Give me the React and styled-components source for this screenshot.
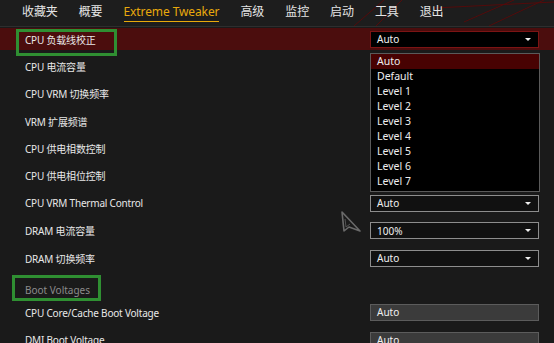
import React from 'react';
import styled, { createGlobalStyle } from 'styled-components';

const GlobalStyle = createGlobalStyle`
  html, body {
    margin: 0;
    padding: 0;
    background: #1a1a1a;
  }
  body {
    font-family: 'Noto Sans', 'Noto Sans CJK SC', sans-serif;
    color: #e6e6e6;
    overflow: hidden;
  }
`;

const StyledScreen = styled.div`
  position: relative;
  width: 554px;
  height: 343px;
  overflow: hidden;
  background: #1a1a1a;
`;

const StyledNav = styled.nav`
  position: relative;
  display: flex;
  align-items: center;
  height: 26px;
  padding-left: 22px;
  background: #1d1d1d;
  border-bottom: 1px solid #2e2e2e;
  overflow: hidden;

  .streaks {
    position: absolute;
    top: 0;
    right: 0;
    pointer-events: none;
  }
`;

const NavItem = styled.span`
  position: relative;
  z-index: 1;
  margin-right: 21px;
  padding-bottom: 1px;
  font-size: 12px;
  line-height: 16px;
  letter-spacing: -0.1px;
  color: ${({ active }) => (active ? '#e9a90c' : '#e4e4e4')};
  border-bottom: 1.5px solid ${({ active }) => (active ? '#e9a90c' : 'transparent')};
`;

const StyledList = styled.div`
  display: flex;
  flex-direction: column;
  gap: 5.4px;
  padding-top: 1px;
`;

const Row = styled.div`
  position: relative;
  display: flex;
  align-items: center;
  justify-content: space-between;
  height: 22px;
  padding: 0 15px 0 25px;
  background: ${({ selected }) => (selected ? '#4b0d0d' : 'transparent')};

  /* green annotation frame */
  ${({ marked }) =>
    marked &&
    `
    &::after {
      content: '';
      position: absolute;
      left: 16px;
      top: 1px;
      box-sizing: border-box;
      width: 101px;
      height: 27px;
      border: 3px solid #2f8f32;
      pointer-events: none;
    }
  `}
`;

const Label = styled.span`
  font-size: 10px;
  letter-spacing: -0.2px;
  color: #e8e8e8;
  white-space: nowrap;
`;

const Select = styled.div`
  position: relative;
  display: flex;
  align-items: center;
  justify-content: space-between;
  box-sizing: border-box;
  width: 169px;
  height: 17px;
  padding: 0 7px 0 6px;
  font-size: 10px;
  color: #f0f0f0;
  background: ${({ open }) => (open ? '#000' : '#111')};
  border: 1px solid ${({ open }) => (open ? '#7c1414' : '#8d8d8d')};
`;

const Caret = styled.span`
  width: 0;
  height: 0;
  border-left: 3.5px solid transparent;
  border-right: 3.5px solid transparent;
  border-top: 3.5px solid #f0f0f0;
`;

const StyledMenu = styled.ul`
  position: absolute;
  top: 21px;
  left: -1px;
  z-index: 5;
  box-sizing: border-box;
  width: 170px;
  margin: 0;
  padding: 0 0 2px;
  list-style: none;
  background: #000;
  border: 1px solid #5a5a5a;
`;

const MenuItem = styled.li`
  height: 15px;
  padding-left: 6px;
  font-size: 10.5px;
  line-height: 15px;
  color: #eeeeee;
  background: ${({ active }) => (active ? '#480202' : 'transparent')};
`;

const SectionHead = styled.div`
  position: relative;
  display: flex;
  flex-direction: column;
  height: 22px;

  &::after {
    content: '';
    position: absolute;
    left: 12px;
    top: 0;
    box-sizing: border-box;
    width: 89px;
    height: 26px;
    border: 3px solid #2f8f32;
    pointer-events: none;
  }
`;

const SectionRule = styled.div`
  height: 1px;
  margin: 3.5px 13px 0 0;
  background: #8a8a8a;
`;

const SectionTitle = styled.div`
  padding-left: 25px;
  font-size: 10px;
  line-height: 24px;
  color: #8c8c8c;
`;

const ValueBox = styled.div`
  box-sizing: border-box;
  width: 169px;
  height: 17px;
  padding-left: 6px;
  font-size: 10px;
  line-height: 15px;
  color: #f0f0f0;
  background: #3b3b3b;
  border: 1px solid #5c5c5c;
`;

const Cursor = styled.svg`
  position: absolute;
  left: 340px;
  top: 210px;
`;

const navItems = ['收藏夹', '概要', 'Extreme Tweaker', '高级', '监控', '启动', '工具', '退出'];
const menuOptions = ['Auto', 'Default', 'Level 1', 'Level 2', 'Level 3', 'Level 4', 'Level 5', 'Level 6', 'Level 7'];

const settings = [
  { label: 'CPU 负载线校正', value: 'Auto', open: true },
  { label: 'CPU 电流容量' },
  { label: 'CPU VRM 切换频率' },
  { label: 'VRM 扩展频谱' },
  { label: 'CPU 供电相数控制' },
  { label: 'CPU 供电相位控制' },
  { label: 'CPU VRM Thermal Control', value: 'Auto' },
  { label: 'DRAM 电流容量', value: '100%' },
  { label: 'DRAM 切换频率', value: 'Auto' },
];

const bootVoltages = [
  { label: 'CPU Core/Cache Boot Voltage', value: 'Auto' },
  { label: 'DMI Boot Voltage', value: 'Auto' },
];

const App = () => (
  <>
    <GlobalStyle />
    <StyledScreen>
      <StyledNav>
        <svg className="streaks" width="240" height="26" viewBox="0 0 240 26">
          <g stroke="#5a0a0a" strokeWidth="1" fill="none" opacity="0.9">
            <line x1="40" y1="26" x2="70" y2="0" />
            <line x1="62" y1="26" x2="88" y2="0" />
            <line x1="150" y1="22" x2="200" y2="0" />
            <line x1="175" y1="26" x2="230" y2="0" />
            <line x1="120" y1="8" x2="240" y2="2" />
          </g>
        </svg>
        {navItems.map(item => (
          <NavItem key={item} active={item === 'Extreme Tweaker'}>
            {item}
          </NavItem>
        ))}
      </StyledNav>

      <StyledList>
        {settings.map((s, i) => (
          <Row key={s.label} selected={s.open} marked={i === 0}>
            <Label>{s.label}</Label>
            {s.value && (
              <Select open={s.open}>
                <span>{s.value}</span>
                <Caret />
                {s.open && (
                  <StyledMenu>
                    {menuOptions.map(opt => (
                      <MenuItem key={opt} active={opt === 'Auto'}>
                        {opt}
                      </MenuItem>
                    ))}
                  </StyledMenu>
                )}
              </Select>
            )}
          </Row>
        ))}

        <SectionHead>
          <SectionRule />
          <SectionTitle>Boot Voltages</SectionTitle>
        </SectionHead>

        {bootVoltages.map(s => (
          <Row key={s.label}>
            <Label>{s.label}</Label>
            <ValueBox>{s.value}</ValueBox>
          </Row>
        ))}
      </StyledList>

      <Cursor width="22" height="24" viewBox="0 0 22 24">
        <path d="M2 2 L4 21 L9 17 L20 21 Z" fill="none" stroke="#6a6a6a" strokeWidth="1.6" strokeLinejoin="round" />
        <path d="M5 9 L6 17 L10 14" fill="none" stroke="#555" strokeWidth="1" />
      </Cursor>
    </StyledScreen>
  </>
);

export default App;
